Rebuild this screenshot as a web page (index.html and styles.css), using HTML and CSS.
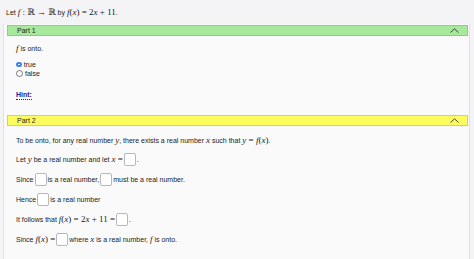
FILE: index.html
```html
<!DOCTYPE html>
<html>
<head>
<meta charset="utf-8">
<link rel="stylesheet" href="styles.css">
</head>
<body>
<div class="stmt">Let <span class="m"><i>f</i> : ℝ → ℝ</span> by <span class="m"><i>f</i>(<i>x</i>) = 2<i>x</i> + 11</span>.</div>
<div class="container">
  <div class="part">
    <div class="head green"><span>Part 1</span><svg class="chev" width="9" height="5" viewBox="0 0 9 5"><path d="M0.5 4.5 L4.5 0.8 L8.5 4.5" fill="none" stroke="#333" stroke-width="0.9"/></svg></div>
    <div class="body1">
      <div class="line"><span class="m"><i>f</i></span> is onto.</div>
      <div class="radios">
        <label class="radio"><span class="dot on"></span>true</label>
        <label class="radio"><span class="dot"></span>false</label>
      </div>
      <div class="hint">Hint:</div>
    </div>
  </div>
  <div class="part">
    <div class="head yellow"><span>Part 2</span><svg class="chev" width="9" height="5" viewBox="0 0 9 5"><path d="M0.5 4.5 L4.5 0.8 L8.5 4.5" fill="none" stroke="#333" stroke-width="0.9"/></svg></div>
    <div class="body2">
      <div class="row first">To be onto, for any real number <span class="m"><i>y</i></span>, there exists a real number <span class="m"><i>x</i></span> such that <span class="m"><i>y</i> = <i>f</i>(<i>x</i>)</span>.</div>
      <div class="row">Let <span class="m"><i>y</i></span>&nbsp;be a real number and let <span class="m"><i>x</i> =</span><span class="box"></span>.</div>
      <div class="row">Since<span class="box"></span>is a real number,<span class="box"></span>must be a real number.</div>
      <div class="row">Hence<span class="box"></span>is a real number</div>
      <div class="row">It follows that <span class="m"><i>f</i>(<i>x</i>) = 2<i>x</i> + 11 =</span><span class="box"></span>.</div>
      <div class="row">Since <span class="m"><i>f</i>(<i>x</i>) =</span><span class="box"></span>where <span class="m"><i>x</i></span> is a real number, <span class="m"><i>f</i></span> is onto.</div>
    </div>
  </div>
</div>
</body>
</html>
```
FILE: styles.css
```css
html, body {
  margin: 0;
  padding: 0;
  background: #f4f4f6;
  font-family: "Liberation Sans", Arial, sans-serif;
  font-size: 7px;
  color: #1a1a1a;
  height: 259px;
  overflow: hidden;
}
.m {
  font-family: "Liberation Serif", "DejaVu Serif", serif;
  font-size: 9px;
}
.m i { font-style: italic; }
.stmt {
  height: 24px;
  line-height: 24px;
  padding-left: 6px;
}
.container {
  margin: 0 4px 0 3px;
  border-left: 1px solid #e2e2e4;
  border-right: 1px solid #e2e2e4;
  background: #fafafa;
  padding: 1px 1px 30px 3px;
}
.head {
  height: 9px;
  display: flex;
  align-items: center;
  justify-content: space-between;
  padding: 0 8px 0 9px;
  font-size: 7px;
  color: #222;
}
.green {
  background: #a6e99a;
  border: 1px solid #a7c27f;
}
.yellow {
  background: #fcfc5e;
  border: 1px solid #d0d07a;
}
.chev { display: block; }
.body1 {
  padding: 7px 0 15px 9px;
}
.line {
  height: 10px;
  line-height: 10px;
}
.radios {
  margin-top: 7px;
  display: flex;
  flex-direction: column;
}
.radio {
  height: 9px;
  display: flex;
  align-items: center;
  gap: 2px;
}
.dot {
  width: 5px;
  height: 5px;
  border-radius: 50%;
  border: 0.8px solid #777;
  background: #fff;
  box-sizing: content-box;
}
.dot.on {
  background: #fff;
  border: 2.2px solid #3d84f0;
  width: 1.8px;
  height: 1.8px;
}
.hint {
  margin-top: 12px;
  display: inline-block;
  color: #23239a;
  font-weight: bold;
  border-bottom: 1px dotted #23239a;
  line-height: 9px;
  height: 9px;
}
.body2 {
  padding: 9px 0 0 9px;
  display: flex;
  flex-direction: column;
  gap: 8px;
}
.row {
  height: 12px;
  display: flex;
  align-items: center;
  white-space: pre;
}
.row.first { height: 10px; }
.box {
  display: inline-block;
  width: 10px;
  height: 11px;
  background: #fff;
  border: 1px solid #b8b8b8;
  border-radius: 2px;
  margin: 0 1px;
}
```
